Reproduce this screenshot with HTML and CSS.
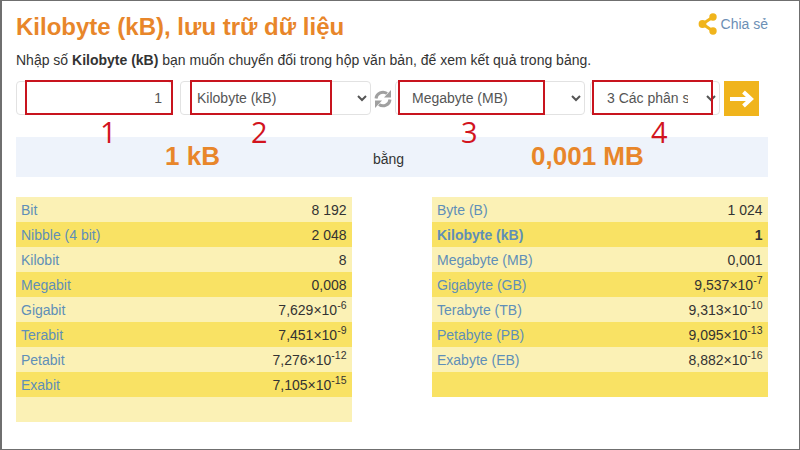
FILE: index.html
```html
<!DOCTYPE html>
<html lang="vi">
<head>
    <meta charset="UTF-8">
    <meta name="viewport" content="width=device-width, initial-scale=1.0">
    <title>Kilobyte (kB), lưu trữ dữ liệu</title>
    <link rel="stylesheet" href="styles.css">
</head>
<body>
    <div class="frame">
        <!-- Header -->
        <header class="top">
            <h1>Kilobyte (kB), lưu trữ dữ liệu</h1>
            <a class="share" href="#">
                <svg width="19" height="22" viewBox="0 0 19 22" aria-hidden="true">
                    <path d="M15 4 L4.500 11 L15 18" fill="none" stroke="#f0b41c" stroke-width="3"/>
                    <circle cx="15" cy="4" r="3.700" fill="#f0b41c"/>
                    <circle cx="4.500" cy="11" r="3.900" fill="#f0b41c"/>
                    <circle cx="15" cy="18" r="3.700" fill="#f0b41c"/>
                </svg>
                <span>Chia sẻ</span>
            </a>
        </header>
        <p class="intro">Nhập số <b>Kilobyte (kB)</b> bạn muốn chuyển đổi trong hộp văn bản, để xem kết quả trong bảng.</p>

        <!-- Converter controls -->
        <div class="controls">
            <div class="field field-value">
                <input type="text" value="1">
                <span class="mark mark-1"></span>
                <span class="num num-1">1</span>
            </div>
            <div class="field field-from">
                <select><option>Kilobyte (kB)</option></select>
                <span class="mark mark-2"></span>
                <span class="num num-2">2</span>
            </div>
            <svg class="swap" width="18" height="22" viewBox="0 0 18 22" aria-hidden="true">
                <path d="M2 10.500 A7 7 0 0 1 13 5.500" fill="none" stroke="#a0a0a0" stroke-width="3"/>
                <path d="M10 9.500 L17 9.500 L17 2 Z" fill="#a0a0a0"/>
                <path d="M16 11.500 A7 7 0 0 1 5 16.500" fill="none" stroke="#a0a0a0" stroke-width="3"/>
                <path d="M8 12.500 L1 12.500 L1 20 Z" fill="#a0a0a0"/>
            </svg>
            <div class="field field-to">
                <select><option>Megabyte (MB)</option></select>
                <span class="mark mark-3"></span>
                <span class="num num-3">3</span>
            </div>
            <div class="field field-digits">
                <select><option>3 Các phân số</option></select>
                <span class="mark mark-4"></span>
                <span class="num num-4">4</span>
            </div>
            <button class="go" aria-label="Chuyển đổi">
                <svg width="24" height="18" viewBox="0 0 24 18" aria-hidden="true">
                    <path d="M0 9 H21 M13.500 2 L21 9 L13.500 16" fill="none" stroke="#fff" stroke-width="4"/>
                </svg>
            </button>
        </div>

        <!-- Result -->
        <div class="result">
            <strong class="res-left">1 kB</strong>
            <span class="res-mid">bằng</span>
            <strong class="res-right">0,001 MB</strong>
        </div>

        <!-- Tables -->
        <div class="tables">
            <table class="units">
                <tr><td><a href="#">Bit</a></td><td>8 192</td></tr>
                <tr><td><a href="#">Nibble (4 bit)</a></td><td>2 048</td></tr>
                <tr><td><a href="#">Kilobit</a></td><td>8</td></tr>
                <tr><td><a href="#">Megabit</a></td><td>0,008</td></tr>
                <tr><td><a href="#">Gigabit</a></td><td>7,629×10<sup>-6</sup></td></tr>
                <tr><td><a href="#">Terabit</a></td><td>7,451×10<sup>-9</sup></td></tr>
                <tr><td><a href="#">Petabit</a></td><td>7,276×10<sup>-12</sup></td></tr>
                <tr><td><a href="#">Exabit</a></td><td>7,105×10<sup>-15</sup></td></tr>
                <tr><td></td><td></td></tr>
            </table>
            <table class="units">
                <tr><td><a href="#">Byte (B)</a></td><td>1 024</td></tr>
                <tr class="current"><td><a href="#">Kilobyte (kB)</a></td><td>1</td></tr>
                <tr><td><a href="#">Megabyte (MB)</a></td><td>0,001</td></tr>
                <tr><td><a href="#">Gigabyte (GB)</a></td><td>9,537×10<sup>-7</sup></td></tr>
                <tr><td><a href="#">Terabyte (TB)</a></td><td>9,313×10<sup>-10</sup></td></tr>
                <tr><td><a href="#">Petabyte (PB)</a></td><td>9,095×10<sup>-13</sup></td></tr>
                <tr><td><a href="#">Exabyte (EB)</a></td><td>8,882×10<sup>-16</sup></td></tr>
                <tr><td></td><td></td></tr>
            </table>
        </div>
    </div>
</body>
</html>
```

FILE: styles.css
```css
* {
    margin: 0;
    padding: 0;
    box-sizing: border-box;
}

body {
    font-family: "Liberation Sans", Arial, sans-serif;
    background-color: #fff;
    color: #333;
}

.frame {
    width: 800px;
    height: 450px;
    padding: 0 31px 0 14px;
    border: 1px solid #6f6f6f;
    border-left-width: 2px;
    overflow: hidden;
}

/* Header */
.top {
    display: flex;
    justify-content: space-between;
    align-items: flex-start;
    height: 48px;
    padding-top: 12px;
}

h1 {
    font-size: 24px;
    line-height: 28px;
    font-weight: bold;
    color: #e8862a;
}

.share {
    display: flex;
    align-items: center;
    gap: 4px;
    color: #6c8fb5;
    font-size: 14px;
    text-decoration: none;
}

.intro {
    font-size: 14px;
    line-height: 22px;
    color: #333;
}

/* Converter controls */
.controls {
    display: flex;
    align-items: flex-start;
    margin-top: 10px;
}

.field {
    position: relative;
}

.field input,
.field select {
    display: block;
    width: 100%;
    height: 34px;
    border: 1px solid #e2e2e2;
    border-radius: 4px;
    background-color: #fff;
    color: #555;
    font-family: inherit;
    font-size: 14px;
}

.field input {
    padding: 0 9px;
    text-align: right;
}

.field select {
    padding: 0 4px 0 12px;
}

.field-value {
    width: 156px;
    margin-right: 8px;
}

.field-from {
    width: 191px;
}

.swap {
    flex: none;
    margin: 7px 3px 0 3px;
}

.field-to {
    width: 190px;
    margin-right: 5px;
}

.field-digits {
    width: 130px;
    margin-right: 4px;
}

.field-digits select {
    padding-right: 15px;
}

.go {
    display: flex;
    align-items: center;
    justify-content: center;
    width: 35px;
    height: 35px;
    border: none;
    background-color: #f0b41c;
}

/* Red annotations over the controls */
.mark {
    position: absolute;
    top: -1px;
    height: 35px;
    border: 2px solid #c8141e;
}

.mark-1 {
    left: 9px;
    width: 148px;
}

.mark-2 {
    left: 10px;
    width: 142px;
}

.mark-3 {
    left: 3px;
    width: 147px;
}

.mark-4 {
    left: 2px;
    width: 121px;
}

.num {
    position: absolute;
    top: 35px;
    font-family: "Open Sans", sans-serif;
    font-size: 29px;
    line-height: 32px;
    color: #d2141e;
}

.num-1 {
    left: 84px;
}

.num-2 {
    left: 71px;
}

.num-3 {
    left: 66px;
}

.num-4 {
    left: 61px;
}

/* Result */
.result {
    display: flex;
    align-items: center;
    height: 40px;
    margin-top: 21px;
    padding-bottom: 2px;
    background-color: #eef3fb;
}

.result strong {
    font-size: 26px;
    color: #e8862a;
}

.res-left {
    margin-left: 149px;
}

.res-mid {
    margin-left: 153px;
    padding-top: 5px;
    font-size: 14px;
}

.res-right {
    margin-left: 127px;
}

/* Tables */
.tables {
    display: flex;
    justify-content: space-between;
    margin-top: 20px;
}

.units {
    width: 336px;
    border-collapse: collapse;
    font-size: 14px;
    align-self: flex-start;
}

.units tr {
    height: 25px;
    background-color: #fbf1b5;
}

.units tr:nth-child(even) {
    background-color: #f9e264;
}

.units td {
    padding: 0 5.500px 0 5px;
    line-height: 16px;
}

.units td:last-child {
    text-align: right;
    color: #333;
}

.units a {
    color: #5f8fb8;
    text-decoration: none;
}

.units sup {
    font-size: 10.5px;
    line-height: 0;
}

.current td {
    font-weight: bold;
}
```
